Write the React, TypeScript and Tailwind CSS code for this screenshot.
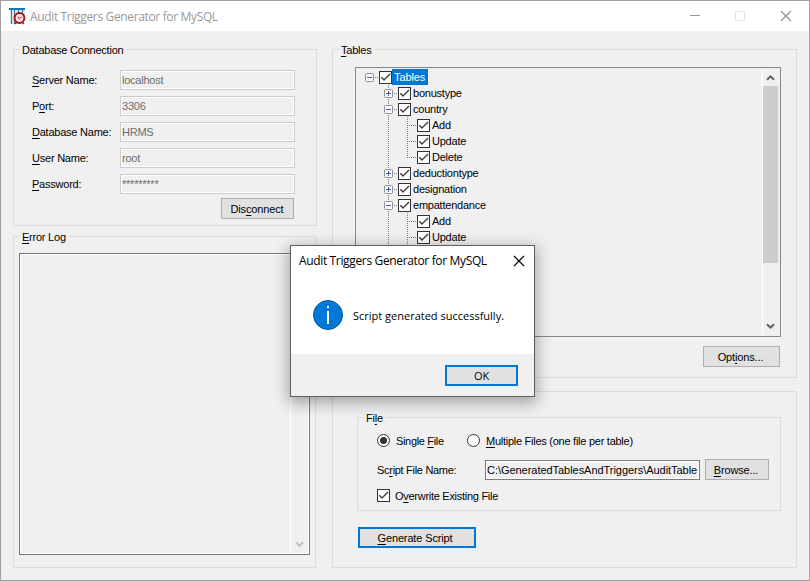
import type { ReactNode } from "react";

type TreeRow = {
  label: string;
  level: 0 | 1 | 2;
  state?: "open" | "closed";
  last?: boolean;
};

const rows: TreeRow[] = [
  { label: "Tables", level: 0, state: "open" },
  { label: "bonustype", level: 1, state: "closed" },
  { label: "country", level: 1, state: "open" },
  { label: "Add", level: 2 },
  { label: "Update", level: 2 },
  { label: "Delete", level: 2, last: true },
  { label: "deductiontype", level: 1, state: "closed" },
  { label: "designation", level: 1, state: "closed" },
  { label: "empattendance", level: 1, state: "open" },
  { label: "Add", level: 2 },
  { label: "Update", level: 2 },
];

const fields = [
  { hot: "S", rest: "erver Name:", value: "localhost" },
  { pre: "P", hot: "o", rest: "rt:", value: "3306" },
  { hot: "D", rest: "atabase Name:", value: "HRMS" },
  { hot: "U", rest: "ser Name:", value: "root" },
  { hot: "P", rest: "assword:", value: "*********" },
];

/** Accelerator key underline */
function Key({ children }: { children: ReactNode }) {
  return (
    <span className="underline decoration-1 underline-offset-2">{children}</span>
  );
}

function Group({
  legend,
  className,
  children,
}: {
  legend?: ReactNode;
  className: string;
  children: ReactNode;
}) {
  return (
    <fieldset className={`min-w-0 shrink-0 border border-[#dcdcdc] ${className}`}>
      {legend && (
        <legend className="ml-1.5 h-[13px] px-0.5 pr-[3px] leading-[15px]">
          {legend}
        </legend>
      )}
      {children}
    </fieldset>
  );
}

function Button({
  className,
  primary,
  children,
}: {
  className: string;
  primary?: boolean;
  children: ReactNode;
}) {
  return (
    <button
      type="button"
      className={`flex h-[21px] shrink-0 items-center justify-center bg-[#e1e1e1] tracking-[-0.14px] ${
        primary ? "border-2 border-[#0078d7]" : "border border-[#adadad]"
      } ${className}`}
    >
      <span>{children}</span>
    </button>
  );
}

function Checkbox() {
  return (
    <svg width="13" height="13" viewBox="0 0 13 13" className="shrink-0">
      <rect x="0.5" y="0.5" width="12" height="12" fill="#fff" stroke="#333" />
      <path d="M2.3 6.2 5 9 11 3" fill="none" stroke="#444" strokeWidth="1.5" />
    </svg>
  );
}

function Radio({ checked }: { checked?: boolean }) {
  return (
    <svg width="13" height="13" viewBox="0 0 13 13" className="shrink-0">
      <circle cx="6.5" cy="6.5" r="6" fill="#fff" stroke="#333" />
      {checked && <circle cx="6.5" cy="6.5" r="3.5" fill="#333" />}
    </svg>
  );
}

function Chevron({ up, color }: { up?: boolean; color: string }) {
  return (
    <svg width="9" height="7" viewBox="0 0 9 7" className={up ? "rotate-180" : ""}>
      <path d="M1 1.2 4.5 4.7 8 1.2" fill="none" stroke={color} strokeWidth="2" />
    </svg>
  );
}

/** One 19px indent column of the tree: dotted guides plus the optional +/- box */
function Branch({ row }: { row: TreeRow }) {
  return (
    <svg width="19" height="16" viewBox="0 0 19 16" className="shrink-0">
      {row.level > 0 && (
        <path
          d={row.last ? "M9.5 0V8" : "M9.5 0V16"}
          stroke="#808080"
          strokeDasharray="1 1"
        />
      )}
      <path d="M9 8.5H18" stroke="#808080" strokeDasharray="1 1" />
      {row.state && (
        <>
          <rect x="5.5" y="4.5" width="8" height="8" rx="1" fill="#f8f8f8" stroke="#919191" />
          <path d="M7 8.5H12" stroke="#4b63a7" />
          {row.state === "closed" && <path d="M9.5 6V11" stroke="#4b63a7" />}
        </>
      )}
    </svg>
  );
}

function TreeItem({ row }: { row: TreeRow }) {
  return (
    <li className="flex h-4 items-center">
      {row.level > 0 && <span className="w-[19px] shrink-0" />}
      {row.level === 2 && (
        <svg width="19" height="16" viewBox="0 0 19 16" className="shrink-0">
          {/* the level-1 guide runs on past the children */}
          <path d="M9.5 0V16" stroke="#808080" strokeDasharray="1 1" />
        </svg>
      )}
      <Branch row={row} />
      <Checkbox />
      {row.level === 0 ? (
        <span className="h-4 w-9 bg-[#0078d7] pl-0.5 leading-[17px] tracking-[-0.1px] text-white">
          {row.label}
        </span>
      ) : (
        <span className="pl-[2px] leading-[17px]">{row.label}</span>
      )}
    </li>
  );
}

function AppIcon() {
  return (
    <svg width="17" height="17" viewBox="0 0 17 17">
      <path d="M1 2h6v14H1zM7 2h9v5H7z" fill="#d3e6f0" />
      <path d="M2.5 2V16M5.5 2V16M9.5 2V6M13.5 2V5" stroke="#4f7186" />
      <path d="M0 0h16v2H0z" fill="#1177b5" />
      <circle cx="10.5" cy="10" r="4.9" fill="#fbe3e3" stroke="#a3161b" strokeWidth="2" />
      <path d="M8.5 9 10.5 10.5 12.5 9" fill="none" stroke="#a3161b" />
      <path d="M6 16 7.5 14.5M15 16 13.5 14.5" stroke="#8c1216" strokeWidth="1.4" />
    </svg>
  );
}

function TitleBar() {
  return (
    <header className="flex h-[30px] shrink-0 items-center bg-white pl-2">
      <AppIcon />
      <h1 className="ml-1 flex-1 font-['Open_Sans','Noto_Sans',sans-serif] text-[12px] tracking-[-0.35px] text-[#999]">
        Audit Triggers Generator for MySQL
      </h1>
      <svg width="103" height="12" viewBox="0 0 103 12" className="mr-[17px]" fill="none">
        <path d="M1 5.5H11" stroke="#999" />
        <rect x="46.5" y="1.5" width="9" height="9" stroke="#e6e6e6" />
        <path d="M92 1 102 11M102 1 92 11" stroke="#8c8c8c" strokeWidth="1.1" />
      </svg>
    </header>
  );
}

function MessageBox() {
  return (
    <div
      role="dialog"
      className="absolute left-[289px] top-[244px] flex h-[152px] w-[245px] flex-col border border-[#5c5f63] bg-white font-['Open_Sans','Noto_Sans',sans-serif] shadow-[0_4px_14px_2px_rgba(0,0,0,0.32)]"
    >
      <div className="flex h-[29px] items-center justify-between pl-2 pr-[9px]">
        <h2 className="text-[12px] tracking-[-0.35px]">Audit Triggers Generator for MySQL</h2>
        <svg width="12" height="12" viewBox="0 0 12 12">
          <path d="M1 1 11 11M11 1 1 11" stroke="#000" strokeWidth="1.1" />
        </svg>
      </div>
      <div className="flex flex-1 items-center pl-[22px] pt-px">
        <svg width="30" height="30" viewBox="0 0 30 30">
          <circle cx="15" cy="15" r="14.5" fill="#0078d7" stroke="#00599f" />
          <path d="M14 11h2v13h-2zM14 6h2v2h-2z" fill="#fff" />
        </svg>
        <p className="ml-2.5 text-[11px] tracking-normal">Script generated successfully.</p>
      </div>
      <div className="flex h-[42px] justify-end bg-[#f0f0f0] pr-4 pt-[11px]">
        <Button primary className="w-[73px]">
          OK
        </Button>
      </div>
    </div>
  );
}

export default function App() {
  return (
    <main className="relative flex h-[581px] w-[810px] flex-col overflow-hidden border border-[#a0a0a0] bg-[#f0f0f0] font-['Liberation_Sans',Arial,sans-serif] text-[11px] leading-[13px] tracking-[-0.23px] text-black">
      <TitleBar />

      <div className="flex gap-[15px] pl-3 pt-3">
        <section className="flex w-[304px] flex-col gap-1">
          <Group legend="Database Connection" className="h-[183px]">
            <div className="mt-3.5 flex flex-col gap-1.5 pl-[18px]">
              {fields.map((f) => (
                <label key={f.value} className="flex h-5 items-center">
                  <span className="w-[88px] whitespace-nowrap">
                    {f.pre}
                    <Key>{f.hot}</Key>
                    {f.rest}
                  </span>
                  <span className="flex h-5 w-[175px] items-center border border-[#ccc] p-px">
                    <span className="h-4 w-full leading-4 text-[#6d6d6d] outline-1 outline-white">
                      {f.value}
                    </span>
                  </span>
                </label>
              ))}
            </div>
            <Button className="ml-[207px] mt-1 w-[73px] pr-px pt-px">
              Dis<Key>c</Key>onnect
            </Button>
          </Group>

          <Group
            legend={
              <>
                <Key>E</Key>rror Log
              </>
            }
            className="h-[338px] w-[303px]"
          >
            <div className="ml-[5px] mt-2.5 flex h-[302px] w-[291px] justify-end border border-[#7a7a7a]">
              <div className="flex w-full justify-end border border-white">
                <div className="flex w-[18px] items-end justify-center border-l border-white pb-[5px]">
                  <Chevron color="#bfbfbf" />
                </div>
              </div>
            </div>
          </Group>
        </section>

        <section className="flex w-[465px] flex-col">
          <Group
            legend={
              <>
                <Key>T</Key>ables
              </>
            }
            className="h-[335px]"
          >
            <div className="ml-[22px] mt-[11px] flex h-[270px] w-[426px] justify-between border border-[#828790]">
              <ul className="pl-1 pt-px">
                {rows.map((row, i) => (
                  <TreeItem key={i} row={row} />
                ))}
              </ul>
              <div className="my-px mr-0.5 flex w-4 flex-col items-center border-l border-white">
                <div className="flex h-[17px] items-center">
                  <Chevron up color="#606060" />
                </div>
                <div className="h-[177px] w-[15px] bg-[#cdcdcd]" />
                <div className="mt-auto flex h-[17px] items-center">
                  <Chevron color="#606060" />
                </div>
              </div>
            </div>
            <Button className="ml-[370px] mt-[9px] w-[77px] pr-0.5 pt-px">
              Opt<Key>i</Key>ons...
            </Button>
          </Group>

          <Group className="mt-[13px] h-[177px]">
            <Group
              legend={
                <>
                  Fi<Key>l</Key>e
                </>
              }
              className="ml-6 mt-[19px] h-[100px] w-[424px]"
            >
              <div className="mt-2.5 flex h-[13px] items-center pl-[19px]">
                <Radio checked />
                <span className="ml-1.5 w-[71px] pt-px tracking-[-0.33px]">
                  Single <Key>F</Key>ile
                </span>
                <Radio />
                <span className="ml-1.5 pt-px tracking-[-0.26px]">
                  <Key>M</Key>ultiple Files (one file per table)
                </span>
              </div>
              <div className="mt-3 flex h-[21px] items-center pl-[19px]">
                <span className="w-[108px] pt-px tracking-[-0.3px]">
                  Sc<Key>r</Key>ipt File Name:
                </span>
                <span className="mt-px h-5 w-[215px] overflow-hidden whitespace-nowrap border border-[#7a7a7a] pl-px leading-[18px] tracking-[-0.04px] ring-1 ring-inset ring-white">
                  C:\GeneratedTablesAndTriggers\AuditTable
                </span>
                <Button className="ml-[5px] w-16 pr-0.5 pt-px">
                  <Key>B</Key>rowse...
                </Button>
              </div>
              <div className="mt-[9px] flex h-[13px] items-center pl-[19px]">
                <Checkbox />
                <span className="ml-[5px] pt-px tracking-[-0.28px]">
                  O<Key>v</Key>erwrite Existing File
                </span>
              </div>
            </Group>
            <Button primary className="ml-[25px] mt-4 w-[118px] pr-1 pt-px">
              <Key>G</Key>enerate Script
            </Button>
          </Group>
        </section>
      </div>

      <MessageBox />
    </main>
  );
}
